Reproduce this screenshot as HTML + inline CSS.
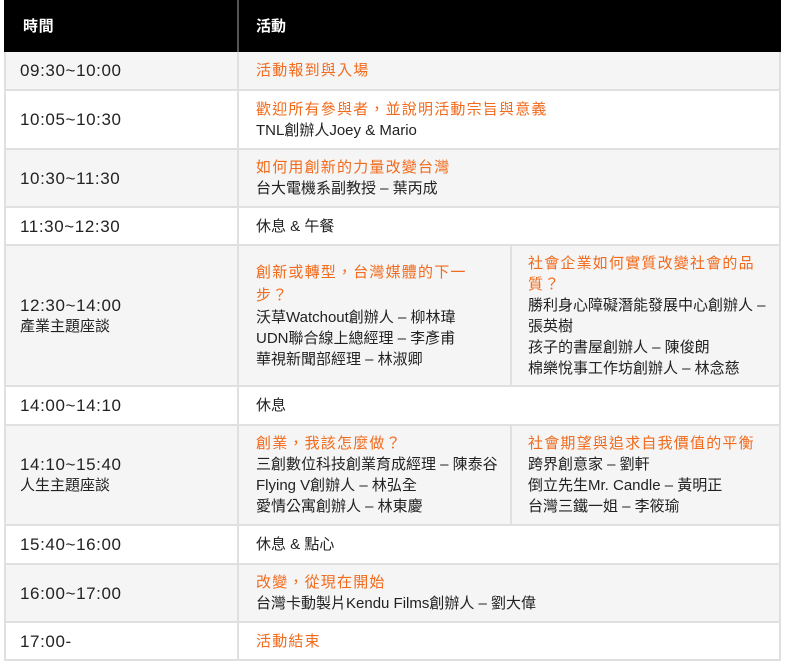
<!DOCTYPE html>
<html><head><meta charset="utf-8"><style>
*{margin:0;padding:0;box-sizing:border-box}
body{width:788px;height:666px;background:#fff;font-family:"Liberation Sans","Noto Sans CJK TC",sans-serif;font-size:15px;color:#222;position:relative;overflow:hidden}
.r{position:absolute;left:4px;width:777px;border-bottom:2px solid #e0e0e0;border-left:2px solid #e0e0e0;border-right:2px solid #e0e0e0}
.g{background:#f5f5f5}
.c{position:absolute;top:0;bottom:0;display:flex;flex-direction:column;justify-content:center;line-height:21px}
.t{left:14px;font-size:17px;letter-spacing:0.6px}
.t span+span{font-size:15px;letter-spacing:0}
.a{left:231px;right:0;padding-left:17px;border-left:2px solid #e0e0e0}
.a2{left:231px;width:273px;padding-left:17px;padding-right:24px;border-left:2px solid #e0e0e0}
.b{left:504px;right:0;padding-left:16px;padding-right:8px;border-left:2px solid #e0e0e0}
.o{color:#f26a1b;letter-spacing:1.2px}
.h{background:#000;color:#fff;font-weight:bold;border:none;border-left:2px solid #000}
.h .t{font-size:15px}
.h .a{border-left:2px solid #555}
</style></head><body>
<div class="r h" style="top:0;height:52px"><div class="c t" style="left:17px">時間</div><div class="c a">活動</div></div>
<div class="r g" style="top:52px;height:39px"><div class="c t">09:30~10:00</div><div class="c a"><span class="o">活動報到與入場</span></div></div>
<div class="r" style="top:91px;height:59px"><div class="c t">10:05~10:30</div><div class="c a"><span class="o">歡迎所有參與者，並說明活動宗旨與意義</span><span>TNL創辦人Joey &amp; Mario</span></div></div>
<div class="r g" style="top:150px;height:58px"><div class="c t">10:30~11:30</div><div class="c a"><span class="o">如何用創新的力量改變台灣</span><span>台大電機系副教授 – 葉丙成</span></div></div>
<div class="r" style="top:208px;height:38px"><div class="c t">11:30~12:30</div><div class="c a">休息 &amp; 午餐</div></div>
<div class="r g" style="top:246px;height:141px"><div class="c t"><span>12:30~14:00</span><span>產業主題座談</span></div>
<div class="c a2"><span class="o" style="line-height:23px">創新或轉型，台灣媒體的下一步？</span><span>沃草Watchout創辦人 – 柳林瑋</span><span>UDN聯合線上總經理 – 李彥甫</span><span>華視新聞部經理 – 林淑卿</span></div>
<div class="c b"><span class="o">社會企業如何實質改變社會的品質？</span><span>勝利身心障礙潛能發展中心創辦人 – 張英樹</span><span>孩子的書屋創辦人 – 陳俊朗</span><span>棉樂悅事工作坊創辦人 – 林念慈</span></div></div>
<div class="r" style="top:387px;height:39px"><div class="c t">14:00~14:10</div><div class="c a">休息</div></div>
<div class="r g" style="top:426px;height:100px"><div class="c t"><span>14:10~15:40</span><span>人生主題座談</span></div>
<div class="c a2" style="padding-right:4px"><span class="o">創業，我該怎麼做？</span><span>三創數位科技創業育成經理 – 陳泰谷</span><span>Flying V創辦人 – 林弘全</span><span>愛情公寓創辦人 – 林東慶</span></div>
<div class="c b"><span class="o">社會期望與追求自我價值的平衡</span><span>跨界創意家 – 劉軒</span><span>倒立先生Mr. Candle – 黃明正</span><span>台灣三鐵一姐 – 李筱瑜</span></div></div>
<div class="r" style="top:526px;height:39px"><div class="c t">15:40~16:00</div><div class="c a">休息 &amp; 點心</div></div>
<div class="r g" style="top:565px;height:58px"><div class="c t">16:00~17:00</div><div class="c a"><span class="o">改變，從現在開始</span><span>台灣卡動製片Kendu Films創辦人 – 劉大偉</span></div></div>
<div class="r" style="top:623px;height:38px"><div class="c t">17:00-</div><div class="c a"><span class="o">活動結束</span></div></div>
</body></html>
